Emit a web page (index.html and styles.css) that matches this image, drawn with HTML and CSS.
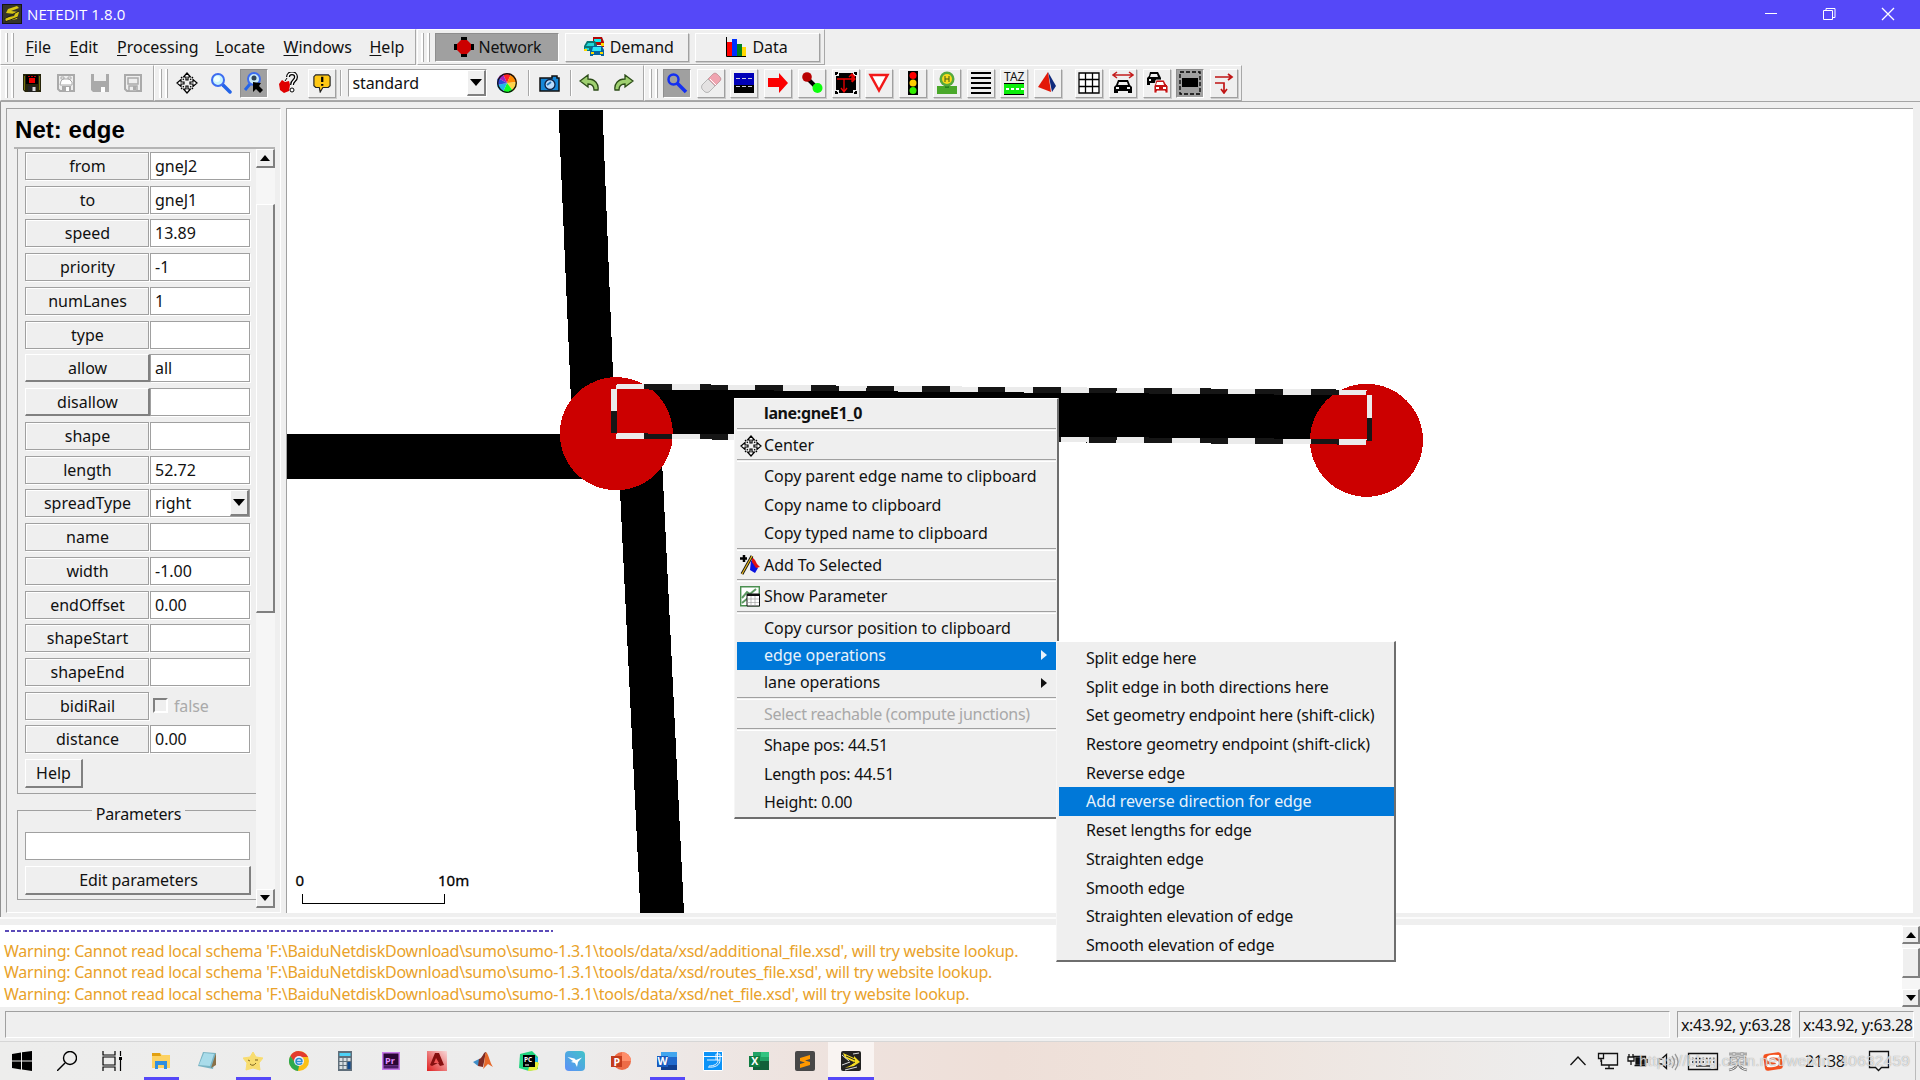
FILE: index.html
```html
<!DOCTYPE html>
<html lang="en">
<head>
<meta charset="utf-8">
<title>NETEDIT 1.8.0</title>
<link rel="stylesheet" href="styles.css">
</head>
<body>
<header class="titlebar">
  <svg class="app-logo" width="20" height="20" viewBox="0 0 20 20"><rect width="20" height="20" fill="#17170f"/><rect x="1" y="1" width="18" height="18" fill="#35342c"/><path d="M6 5l9-3 2 2-8 3 8 1-2 7-11 2-1-3 9-2 1-2-9-1z" fill="#d8c515"/><path d="M2 15l15-8M3 18l13-5" stroke="#22211a"/></svg>
  <span class="title-text">NETEDIT 1.8.0</span>
  <svg class="winbtns" width="140" height="29" viewBox="0 0 140 29" fill="none" stroke="#fff"><path d="M5 13.500h12"/><path d="M63.500 10.500h9v9h-9zM66 10.500v-2h9v9h-2"/><path d="M122 8l12 12M134 8l-12 12" stroke-width="1.300"/></svg>
</header>

<nav class="menurow">
  <div class="dock menus"><i class="grip"></i>
    <span class="m m-file"><u>F</u>ile</span><span class="m m-edit"><u>E</u>dit</span><span class="m m-proc"><u>P</u>rocessing</span><span class="m m-loc"><u>L</u>ocate</span><span class="m m-win"><u>W</u>indows</span><span class="m"><u>H</u>elp</span>
  </div>
  <div class="dock modes"><i class="grip"></i>
    <div class="mode on"><svg width="20" height="20" viewBox="0 0 20 20"><path d="M7 0h6v20H7zM0 7h20v6H0z"/><path d="M7 3h6l4 4v6l-4 4H7l-4-4V7z" fill="#c00"/></svg>Network</div>
    <div class="mode"><svg width="21" height="20" viewBox="0 0 21 20"><path d="M9 0h9l2 5v5h-3v-2H9V4z" fill="#b00808"/><path d="M10 2h7v3h-7z" fill="#1ee"/><path d="M3 4h8l2 4v6H0V9z" fill="#087878"/><path d="M4 6h6v3H2zM1 11h4v2H1z" fill="#1ed6d6"/><path d="M8 9h10l2 4v6h-3v-1H9v1H6v-6z" fill="#0563a0"/><path d="M9 10h8v4H8z" fill="#2de8f8"/><path d="M7 15h3v2H7zM16 15h3v2h-3zM17 6h3v3h-3zM0 12h3v2H0z" fill="#ffd900"/></svg>Demand</div>
    <div class="mode data"><svg width="21" height="20" viewBox="0 0 21 20"><path d="M1 5h5v14H1z" fill="#f00"/><path d="M6 2h5v17H6z" fill="#0030ff"/><path d="M11 7h5v12h-5z" fill="#008020"/><path d="M16 10h4v9h-4z" fill="#ffd800"/><path d="M.5 0v19.500H20" fill="none" stroke="#000"/></svg>Data</div>
  </div>
</nav>

<nav class="toolrow">
  <div class="dock files"><i class="grip"></i>
    <span class="slot"><svg width="18" height="18" viewBox="0 0 18 18"><path d="M0 0h18v18H2l-2-2z" fill="#26240a"/><path d="M3 1h12v9H3z" fill="#000"/><path d="M6 4h6v5H6z" fill="#e00"/><path d="M5 2.500h9" stroke="#b00" stroke-dasharray="2 1"/><path d="M5 12h8v6H5z" fill="#222"/><path d="M9.500 13h3v4h-3z" fill="#ddd"/><path d="M1.500 2v14M16.500 2v14" stroke="#777410" fill="none"/></svg></span>
    <span class="slot"><svg width="18" height="18" viewBox="0 0 18 18"><path d="M1 1h16v16H3l-2-2z" fill="#eee" stroke="#aaa" stroke-width="2"/><path d="M4 3h3v2H4zM11 3h3v2h-3zM4 7l2-2h6l3 3v3H3z" fill="#fff" stroke="#aaa"/><path d="M5 12h9v5H5z" fill="#aaa"/><path d="M9 13h3v4H9z" fill="#fff"/></svg></span>
    <span class="slot"><svg width="18" height="18" viewBox="0 0 18 18"><path d="M0 0h18v18H2l-2-2z" fill="#aaa"/><path d="M3 0h12v7H3z" fill="#eee"/><path d="M10 13h4v5h-4z" fill="#fff"/></svg></span>
    <span class="slot"><svg width="18" height="18" viewBox="0 0 18 18" fill="#eee" stroke="#aaa" stroke-width="2"><path d="M1 1h16v16H3l-2-2z"/><path d="M4 4h10v6H4zM5 12h8v5H5z" stroke-width="1.500"/><path d="M9 12h3v4H9z" fill="#aaa" stroke="none"/></svg></span>
  </div>
  <div class="dock view"><i class="grip"></i>
    <span class="slot"><svg width="22" height="22" viewBox="0 0 22 22" fill="#fff" stroke="#000" stroke-width="1.200"><g id="mv"><path d="M11 1l3.500 4H12v3h-2V5H7.500z"/><path d="M11 21l3.500-4H12v-3h-2v3H7.500z"/><path d="M1 11l4-3.500V10h3v2H5v2.500z"/><path d="M21 11l-4-3.500V10h-3v2h3v2.500z"/><path d="M5 5l3 3M17 5l-3 3M5 17l3-3M17 17l-3-3" stroke-dasharray="1.500 1"/></g></svg></span>
    <span class="slot"><svg width="22" height="22" viewBox="0 0 22 22"><path d="M13 13l7 7" stroke="#2364e8" stroke-width="3.500" stroke-linecap="round"/><circle cx="8" cy="8" r="6" fill="#c9f4fc" stroke="#3c6cf0" stroke-width="2"/><circle cx="7" cy="7" r="3" fill="#eeffff"/></svg></span>
    <span class="slot"><span class="tb on"><svg width="24" height="24" viewBox="0 0 24 24"><path d="M8 13l-5 6" stroke="#2364e8" stroke-width="3"/><circle cx="12" cy="8" r="6" fill="#c9eaf8" stroke="#3c6cf0" stroke-width="2"/><circle cx="12" cy="7" r="2.500" fill="#345"/><path d="M11 11l8 1-2 3 4 4-3 3-4-4-3 3z"/></svg></span></span>
    <span class="slot"><svg width="20" height="22" viewBox="0 0 20 22"><path d="M1 12l3-4 3 2 4-1 1 4-1 6-5 2-4-3z" fill="#e00000"/><path d="M7 9l2-3" stroke="#000"/><path d="M10 5c0-5 8-5 8 0 0 4-4 3-4 8" fill="none" stroke="#000" stroke-width="4"/><path d="M10 5c0-5 8-5 8 0 0 4-4 3-4 8" fill="none" stroke="#fff" stroke-width="1.500"/><circle cx="14" cy="18" r="2" fill="#fff" stroke="#000"/></svg></span>
    <span class="slot"><span class="tb"><svg width="18" height="20" viewBox="0 0 20 22"><path d="M3 2h14l2 2v10l-2 2h-6l-3 5-1-5H3l-2-2V4z" fill="#ffc813" stroke="#222" stroke-width="1.300"/><path d="M9 4h2.500v6H9zM9 12h2.500v2H9z"/></svg></span></span>
    <i class="vsep first"></i>
    <div class="combo"><span>standard</span><b class="drop"></b></div>
    <span class="slot wide"><svg width="20" height="20" viewBox="-10 -10 20 20"><path d="M0 0L-4-9A10 10 0 0 1 4-9z" fill="#f22"/><path d="M0 0L4-9A10 10 0 0 1 10-1z" fill="#ff8a00"/><path d="M0 0L10-1A10 10 0 0 1 6 8z" fill="#ffd54a"/><path d="M0 0L6 8A10 10 0 0 1-4 9z" fill="#1f2"/><path d="M0 0L-4 9A10 10 0 0 1-10 2z" fill="#20b8e8"/><path d="M0 0L-10 2A10 10 0 0 1-9-5z" fill="#3048d8"/><path d="M0 0L-9-5A10 10 0 0 1-4-9z" fill="#a020c0"/><circle r="9.300" fill="none" stroke="#111" stroke-width="1.300"/></svg></span>
    <i class="vsep"></i>
    <span class="slot wide"><svg width="21" height="17" viewBox="0 0 21 17"><path d="M1 3h12V1h5v2h2v13H1z" fill="#1687d8" stroke="#111" stroke-width="1.500"/><circle cx="11" cy="9.500" r="5" fill="#bdf" stroke="#124" stroke-width="1.300"/><path d="M8 10l4-3" stroke="#27b" stroke-width="2"/></svg></span>
    <i class="vsep late"></i>
    <span class="slot"><svg width="21" height="18" viewBox="0 0 21 18"><path d="M1 7l8-6v4c7 0 11 5 10 11h-4c0-4-2-6-6-6v3z" fill="#9fd070" stroke="#2c4c18" stroke-width="1.300"/></svg></span>
    <span class="slot"><svg width="21" height="18" viewBox="0 0 21 18"><path d="M20 7l-8-6v4C5 5 1 10 2 16h4c0-4 2-6 6-6v3z" fill="#9fd070" stroke="#2c4c18" stroke-width="1.300"/></svg></span>
  </div>
  <div class="dock edit"><i class="grip"></i>
    <span class="tb on"><svg width="22" height="22" viewBox="0 0 22 22" fill="none" stroke="#1530f0"><circle cx="7.500" cy="7.500" r="5" stroke-width="2.500"/><path d="M11 11l9 9" stroke-width="3.500"/></svg></span>
    <span class="tb"><svg width="22" height="22" viewBox="0 0 22 22"><path d="M13 2q2-2 4 0l3 3q2 2 0 4l-5 5-7-7z" fill="#f0a4b0" stroke="#b8888e" stroke-width=".7"/><path d="M8 7l7 7-6 6q-2 1-4 0l-3-3q-1-2 0-4z" fill="#e4e2e2" stroke="#aaa" stroke-width=".8"/><path d="M10 7l6 6" stroke="#fff"/></svg></span>
    <span class="tb"><svg width="22" height="22" viewBox="0 0 22 22"><path d="M1 1h20v12H1z" fill="#0000b8"/><path d="M1 13h20v8H1z"/><path d="M3 6.500h16M3 14.500h16" stroke="#ccd" stroke-width="1.200" stroke-dasharray="4 2"/></svg></span>
    <span class="tb"><svg width="22" height="22" viewBox="0 0 22 22"><path d="M1 6h11V1l9 10-9 10v-6H1z" fill="#fb0000"/></svg></span>
    <span class="tb"><svg width="22" height="22" viewBox="0 0 22 22"><path d="M6 6l10 10" stroke="#000" stroke-width="4"/><circle cx="6" cy="5" r="4.800" fill="#b80000"/><circle cx="16.500" cy="16" r="5" fill="#0cff0c"/></svg></span>
    <span class="tb"><svg width="22" height="22" viewBox="0 0 22 22"><path d="M1 4h20v14H1zM4 1h14v20H4z"/><path d="M1 3V1h2M19 1h2v2M1 19v2h2M19 21h2v-2" stroke="#000" stroke-width="2" fill="none"/><path d="M2 7h17M9 7v12M6 16l3 4 3-4M17 3v7M14 5l3-3 3 3M17 4l3 3-3 3" fill="none" stroke="#e00" stroke-width="1.300"/></svg></span>
    <span class="tb"><svg width="22" height="22" viewBox="0 0 22 22"><path d="M2.500 3h17L11 18.500z" fill="#fff" stroke="#f21818" stroke-width="2.500"/></svg></span>
    <span class="tb"><svg width="12" height="24" viewBox="0 0 12 24"><path d="M1 0h10v24H1z"/><circle cx="6" cy="4.500" r="3.500" fill="#f00"/><circle cx="6" cy="12" r="3.500" fill="#fc0"/><circle cx="6" cy="19.500" r="3.500" fill="#3e0"/></svg></span>
    <span class="tb"><svg width="22" height="24" viewBox="0 0 22 24"><path d="M1 15h20v8H1z" fill="#4aa82a"/><path d="M9 12h4v5H9z" fill="#26801a"/><circle cx="11" cy="8" r="7.500" fill="#54a93c"/><circle cx="11" cy="8" r="5" fill="#f6da1b"/><path d="M9 5v6M13 5v6M9 8h4" stroke="#3c5c12" fill="none"/></svg></span>
    <span class="tb"><svg width="22" height="24" viewBox="0 0 22 24" stroke="#000" stroke-width="2"><path d="M1 2h20M1 7h20M1 12h20M1 17h20M1 22h20"/></svg></span>
    <span class="tb taz"><span>TAZ</span><svg width="20" height="12" viewBox="0 0 20 12"><path d="M0 0h20v12H0z" fill="#0cee0c"/><path d="M0 .5h20M0 11.500h20" stroke="#000"/><path d="M2 6h18" stroke="#fff" stroke-width="2" stroke-dasharray="3 2"/></svg></span>
    <span class="tb"><svg width="22" height="22" viewBox="0 0 22 22"><path d="M11 0l8 14-4 6z" fill="#102a7c"/><path d="M11 0L1 15l13 5z" fill="#e31808"/></svg></span>
    <i class="gap"></i>
    <span class="tb"><svg width="22" height="22" viewBox="0 0 22 22" fill="#fff" stroke="#000" stroke-width="1.300"><path d="M1 1h20v20H1zM1 7.500h20M1 14.500h20M7.500 1v20M14.500 1v20"/></svg></span>
    <span class="tb"><svg width="22" height="24" viewBox="0 0 22 24"><path d="M1 4h20M5 1L1 4l4 3M17 1l4 3-4 3" fill="none" stroke="#c41c1c" stroke-width="1.500"/><path d="M6 9h10l2 5 2 2v6h-4v-2H6v2H2v-6l2-2z"/><path d="M7 11h8l1 3H6zM4 16h3v2H4zM15 16h3v2h-3z" fill="#eee"/></svg></span>
    <span class="tb"><svg width="22" height="24" viewBox="0 0 22 24"><path d="M4 1h8l2 4 1 2v6h-3v-1H4v2H1V7l2-2z"/><path d="M5 3h6l1 3H4zM3 8h2v2H3z" fill="#eee"/><path d="M10 9h8l2 4 2 2v7h-3v-2h-8v2H8v-7l1-2z" fill="#c41313" stroke="#fff" stroke-width=".8"/><path d="M11 11h6l1 3h-8zM10 16h3v2h-3zM17 16h3v2h-3z" fill="#fff"/></svg></span>
    <span class="tb on"><svg width="22" height="24" viewBox="0 0 22 24"><path d="M1 1h20v22H1z" fill="none" stroke="#000" stroke-width="1.300" stroke-dasharray="4 2"/><path d="M3 7h16v9H3z"/></svg></span>
    <span class="tb"><svg width="22" height="22" viewBox="0 0 22 22" fill="none" stroke="#c01515" stroke-width="1.700"><path d="M2 5h17M15 2l4 3-4 3M2 11h9v9M8 17l3 4 3-4"/></svg></span>
  </div>
</nav>

<main class="main">
  <aside class="panel">
    <h1>Net: edge</h1>
    <div class="scroller">
      <div class="content">
        <div class="attrs">
          <div class="row"><span class="lab">from</span><span class="val">gneJ2</span></div>
          <div class="row"><span class="lab">to</span><span class="val">gneJ1</span></div>
          <div class="row"><span class="lab">speed</span><span class="val">13.89</span></div>
          <div class="row"><span class="lab">priority</span><span class="val">-1</span></div>
          <div class="row"><span class="lab">numLanes</span><span class="val">1</span></div>
          <div class="row"><span class="lab">type</span><span class="val"></span></div>
          <div class="row"><span class="lab btn">allow</span><span class="val">all</span></div>
          <div class="row"><span class="lab btn">disallow</span><span class="val"></span></div>
          <div class="row"><span class="lab">shape</span><span class="val"></span></div>
          <div class="row"><span class="lab">length</span><span class="val">52.72</span></div>
          <div class="row"><span class="lab">spreadType</span><span class="val sel">right<b class="drop"></b></span></div>
          <div class="row"><span class="lab">name</span><span class="val"></span></div>
          <div class="row"><span class="lab">width</span><span class="val">-1.00</span></div>
          <div class="row"><span class="lab">endOffset</span><span class="val">0.00</span></div>
          <div class="row"><span class="lab">shapeStart</span><span class="val"></span></div>
          <div class="row"><span class="lab">shapeEnd</span><span class="val"></span></div>
          <div class="row"><span class="lab">bidiRail</span><span class="check"><i></i>false</span></div>
          <div class="row"><span class="lab">distance</span><span class="val">0.00</span></div>
          <div class="help btn">Help</div>
        </div>
        <div class="params">
          <div class="legend">Parameters</div>
          <div class="field"></div>
          <div class="btn wide">Edit parameters</div>
        </div>
      </div>
      <div class="sbar"><b class="sb up"></b><i class="thumb"></i><b class="sb down"></b></div>
    </div>
  </aside>
  <section class="canvas">
    <svg width="1626" height="805" viewBox="286 108 1626 805">
      <g shape-rendering="crispEdges">
        <path d="M558.500 110h44L614 400h-43z"/>
        <path d="M286 434h300v45H286z"/>
        <path d="M618.500 460H662l22 453h-43.500z"/>
        <path d="M616 387L1367 393v49L616 436z"/>
        <circle cx="616.300" cy="433.700" r="56.500" fill="#c00"/>
        <circle cx="1366.500" cy="440.300" r="56.500" fill="#c00"/>
        <g fill="none" stroke-width="5.500">
          <path d="M616.500 386.500L1366.500 392.500M616.500 436L1366.500 442M614 389v44M1369.500 395v46" stroke="#161616"/>
          <path d="M616.500 386.500L1366.500 392.500M616.500 436L1366.500 442" stroke="#ebebeb" stroke-dasharray="27.780"/>
          <path d="M614 389v22M1369.500 395v23" stroke="#ebebeb"/>
        </g>
        <path d="M302.500 894v9.500h142V894" fill="none" stroke="#000" stroke-width="1.500"/>
      </g>
      <g class="scale"><text x="295.500" y="886">0</text><text x="438" y="886">10m</text></g>
    </svg>
  </section>
</main>

<section class="log">
  <div class="lines">
    <i class="dashes"></i>
    <p class="w1">Warning: Cannot read local schema 'F:\BaiduNetdiskDownload\sumo\sumo-1.3.1\tools/data/xsd/additional_file.xsd', will try website lookup.</p>
    <p>Warning: Cannot read local schema 'F:\BaiduNetdiskDownload\sumo\sumo-1.3.1\tools/data/xsd/routes_file.xsd', will try website lookup.</p>
    <p>Warning: Cannot read local schema 'F:\BaiduNetdiskDownload\sumo\sumo-1.3.1\tools/data/xsd/net_file.xsd', will try website lookup.</p>
  </div>
  <div class="sbar log-bar"><b class="sb up"></b><i class="thumb"></i><b class="sb down"></b></div>
</section>

<footer class="status"><div class="cell grow"></div><div class="cell">x:43.92, y:63.28</div><div class="cell">x:43.92, y:63.28</div></footer>

<div class="taskbar">
  <div class="apps">
    <span class="t"><svg viewBox="0 0 20 20"><path d="M0 3l9-1.500V9.500H0zM10 1.300L20 0v9.500H10zM0 10.500h9v8L0 17zM10 10.500h10V20l-10-1.500z"/></svg></span>
    <span class="t"><svg viewBox="0 0 20 20" fill="none" stroke="#000" stroke-width="1.400"><circle cx="13" cy="7" r="6.500"/><path d="M8 12l-8 8"/></svg></span>
    <span class="t"><svg viewBox="0 0 20 20" fill="none" stroke="#000" stroke-width="1.200"><path d="M1 0v4h12V0M1 6h12v8H1zM1 20v-4h12v4M18.500 0v5M18.500 9v11"/><path d="M17 6h3v3h-3z" fill="#000" stroke="none"/></svg></span>
    <span class="t run"><svg viewBox="0 0 20 20"><path d="M1 2h8l2 2h8v13H1z" fill="#fdd262"/><path d="M1 2h8l1 3H1z" fill="#e2a010"/><path d="M4 18v-8h12v8h-3v-4H7v4z" fill="#2f8ee0"/></svg></span>
    <span class="t"><svg viewBox="0 0 20 20"><path d="M6 1l13 1-3 16-15-3z" fill="#79b4c4"/><path d="M7 2l10 1-4 12L2 14z" fill="#a9dcea"/><path d="M19 2v12l-5 3z" fill="#8a7046"/></svg></span>
    <span class="t run"><svg viewBox="0 0 20 20"><path d="M10 1l3 5 7 1-4 5 1 7-7-2-7 2 1-7-4-5 7-1z" fill="#f8dd70" stroke="#f8dd70" stroke-linejoin="round"/><path d="M5 9l2 1M12 9h3M7 13q3 3 6-1" fill="none" stroke="#7c6322"/></svg></span>
    <span class="t"><svg viewBox="0 0 20 20"><circle cx="10" cy="10" r="10" fill="#fbc116"/><path d="M1.300 5A10 10 0 0 1 19 6h-9l-4 6z" fill="#e33b2e"/><path d="M1.300 5L7 13l3 2-1 5A10 10 0 0 1 1.300 5" fill="#2da94f"/><circle cx="10" cy="10" r="5" fill="#eef"/><path d="M7 10.500h6c0-4-6-4-6 0s5 3 6 1.500" fill="none" stroke="#2a8fd0" stroke-width="1.500"/></svg></span>
    <span class="t"><svg viewBox="0 0 20 20"><path d="M3 0h14v20H3z" fill="#5f6e7a"/><path d="M4.500 2h11v3h-11z" fill="#4dd2f7"/><path d="M4.500 7h3v3h-3zM8.500 7h3v3h-3zM12.500 7h3v3h-3zM4.500 11h3v3h-3zM8.500 11h3v3h-3zM4.500 15h3v3h-3zM8.500 15h3v3h-3z" fill="#d9dfe3"/><path d="M12.500 11h3v7h-3z" fill="#104a90"/></svg></span>
    <span class="t"><svg viewBox="0 0 20 20"><path d="M1 1h18v18H1z" fill="#c77bea"/><path d="M2.500 2.500h15v12h-15z" fill="#2a0634"/><text x="4" y="12.500" class="glyph pr">Pr</text><path d="M2.500 14.500h15v3h-15z" fill="#4a1a66"/></svg></span>
    <span class="t"><svg viewBox="0 0 20 20"><defs><linearGradient id="ar" x1="1" y1="0" x2="0" y2="1"><stop offset="0" stop-color="#f8d8d8"/><stop offset="1" stop-color="#e02020"/></linearGradient></defs><path d="M0 0h20v20H0z" fill="url(#ar)"/><path d="M8 2h4l5 12-4 1-2-3-6 3-2-1z" fill="#861010"/><path d="M9 7l3 5H7z" fill="#e55"/></svg></span>
    <span class="t"><svg viewBox="0 0 20 20"><path d="M0 11l6-3 3 3-4 4z" fill="#3f8ec8"/><path d="M6 8c4-1 4-7 7-7l-3 15-5-1z" fill="#7c2a24"/><path d="M13 1c3 3 4 11 7 15l-5-3-5 5c2-5 1-12 3-17z" fill="#e5682a"/></svg></span>
    <span class="t"><svg viewBox="0 0 20 20"><path d="M1 3l12-3 6 6v12l-9 2-10-3z" fill="#22d47f"/><path d="M12 8l8 4-2 7-9 1z" fill="#e7ee3a"/><path d="M14 5l5 2v4h-5z" fill="#27b6e8"/><path d="M4 4h12v12H4z"/><text x="5" y="10.500" class="glyph pc">PC</text><path d="M6 14h4" stroke="#fff"/></svg></span>
    <span class="t"><svg viewBox="0 0 20 20"><defs><linearGradient id="bd" x2="0" y2="1" x1="1" y1="0"><stop stop-color="#40c3c8"/><stop offset="1" stop-color="#5d8ff8"/></linearGradient></defs><rect width="20" height="20" rx="4" fill="url(#bd)"/><path d="M2.500 6l7 1.500L11 9l6-2.500-4 4.500-1 5-2-4-4-1 2-1z" fill="#fff"/></svg></span>
    <span class="t"><svg viewBox="0 0 20 20"><circle cx="11" cy="10" r="9" fill="#ed6c47"/><path d="M11 1a9 9 0 0 1 9 9h-9z" fill="#ff8f6b"/><path d="M0 5h11v11H0z" fill="#c33c1d"/><text x="2.500" y="14.500" class="glyph office">P</text></svg></span>
    <span class="t run"><svg viewBox="0 0 20 20"><path d="M4 1h16v5H4z" fill="#41a5ee"/><path d="M4 6h16v8H4z" fill="#2069cc"/><path d="M4 14h16v5H4z" fill="#103f91"/><path d="M0 5h11v11H0z" fill="#185abd"/><text x="0.500" y="14" class="glyph office">W</text></svg></span>
    <span class="t"><svg viewBox="0 0 20 20"><path d="M.5.500h19v19H.5z" fill="#0c93f7" stroke="#fff"/><path d="M1 5.500h18M14.500 1v8M4 9h9M13 3h4v6h-4zM6 15c5 0 9-2 9-6M5 16c7 1 12-2 12-7" fill="none" stroke="#fff" stroke-width=".9"/></svg></span>
    <span class="t"><svg viewBox="0 0 20 20"><path d="M4 1h16v18H4z" fill="#21a366"/><path d="M4 10h16v9H4z" fill="#12603a"/><path d="M12 1h8v5h-8z" fill="#33c481"/><path d="M0 5h11v11H0z" fill="#107c41"/><text x="2.200" y="14" class="glyph office">X</text></svg></span>
    <span class="t"><svg viewBox="0 0 20 20"><rect width="20" height="20" rx="2" fill="#484848"/><path d="M15 4v4l-5 1.500 5 1.500v3L5 17v-4l5-1.500L5 10V7z" fill="#ff9800"/></svg></span>
    <span class="t run active"><svg viewBox="0 0 20 20"><rect width="20" height="20" rx="2" fill="#222"/><path d="M2 2l11 5 0-2 6 6-6 4-9 2 6-3 3-3-9-4z" fill="#f4dc22"/><path d="M1 4l7 6M1 14l8-3M4 19l12-3M12 3l6-1" stroke="#ddd"/><path d="M5 5l9 4M7 15l7-4" stroke="#222"/></svg></span>
  </div>
  <div class="tray">
    <svg width="345" height="38" viewBox="1570 1042 345 38" fill="none" stroke="#111" stroke-width="1.300">
      <path d="M1570.500 1065l7.500-8 7.500 8"/>
      <path d="M1603 1053.500h14.500v11.500h-16v-5M1609 1065v3.500M1605 1068.500h9M1598.500 1053.500h5v5h-5zM1601 1058v4"/>
      <path d="M1632.500 1056.500h13v9h-11M1647 1059v4M1628 1057h6v4h-6zM1629 1054v3M1633 1054v3M1631 1061v4"/><path d="M1636 1058h8v6h-8z" fill="#111"/>
      <path d="M1658.500 1059h3l5-4.500v14l-5-4.500h-3z"/><path d="M1669 1058q3 4 0 8M1672 1056q5 6 0 12M1675 1054q6 8 0 16" stroke="#999"/>
      <path d="M1688.500 1053.500h29v16h-29z"/><path d="M1692 1058.500h23M1692 1062h23" stroke-dasharray="1.500 2"/><path d="M1696 1066h14"/>
      <path d="M1729 1054h18M1734 1052v4M1742 1052v4M1731 1058h14v5h-14zM1738 1056v7M1728 1064h20M1737 1064q-1 5-8 6M1739 1064q1 5 8 6" stroke="#666" stroke-width="2.400"/>
      <path d="M1729 1054h18M1734 1052v4M1742 1052v4M1731 1058h14v5h-14zM1738 1056v7M1728 1064h20M1737 1064q-1 5-8 6M1739 1064q1 5 8 6" stroke="#f2f2f2" stroke-width="1"/>
      <rect x="1764" y="1053" width="18" height="17" rx="3" fill="#f4511e" stroke="none" transform="rotate(-8 1773 1061)"/><path d="M1779 1056.500c-13-2-14 4-6 4.500s6 6-6 4.500" stroke="#fff" stroke-width="2.800"/>
      <path d="M1869.500 1051.500h19v16h-7l-3 3-3-3h-6z"/>
    </svg>
    <span class="clock">21:38</span>
    <span class="mark">https://blog.csdn.net/weixin_40632459</span>
  </div>
</div>

<div class="menu ctx">
  <div class="it bold">lane:gneE1_0</div><hr>
  <div class="it"><svg class="mi" width="22" height="22" viewBox="0 0 22 22" fill="#fff" stroke="#000" stroke-width="1.200"><use href="#mv"/></svg>Center</div><hr>
  <div class="it">Copy parent edge name to clipboard</div>
  <div class="it">Copy name to clipboard</div>
  <div class="it">Copy typed name to clipboard</div><hr>
  <div class="it"><svg class="mi" width="20" height="20" viewBox="0 0 20 20"><path d="M4 0v7M0 3.500h7" stroke="#000" stroke-width="2.500"/><path d="M11 5l7 8-3 5-5-3z" fill="#0a12e0"/><path d="M12 2l3 3 2 4 3 3-4 1-4-6z" fill="#e01010"/><path d="M12 1L2 19" stroke="#111" stroke-width="3"/><path d="M12 1L2 19" stroke="#eebc20" stroke-width="1.200"/></svg>Add To Selected</div><hr>
  <div class="it"><svg class="mi" width="20" height="21" viewBox="0 0 20 21"><path d="M.7.700h18.600v19H.7z" fill="#fff" stroke="#4a8f50" stroke-width="1.400"/><path d="M2 12l5-6 3 2 6-5M2 17l6-5" stroke="#5d9a62" stroke-width="2" fill="none"/><path d="M7 8h12.500v12H7z" fill="#fff" stroke="#111"/><path d="M7 9h12" stroke="#111" stroke-width="2"/><path d="M7 13h12M7 16.500h12M11 10v10M15 10v10" stroke="#999" stroke-width=".6"/></svg>Show Parameter</div><hr>
  <div class="it">Copy cursor position to clipboard</div>
  <div class="it casc hot">edge operations<i class="arr"></i></div>
  <div class="it casc">lane operations<i class="arr"></i></div><hr>
  <div class="it disabled">Select reachable (compute junctions)</div><hr>
  <div class="it num">Shape pos: 44.51</div>
  <div class="it num">Length pos: 44.51</div>
  <div class="it num">Height: 0.00</div>
</div>
<div class="menu sub">
  <div class="it">Split edge here</div>
  <div class="it">Split edge in both directions here</div>
  <div class="it">Set geometry endpoint here (shift-click)</div>
  <div class="it">Restore geometry endpoint (shift-click)</div>
  <div class="it">Reverse edge</div>
  <div class="it hot">Add reverse direction for edge</div>
  <div class="it">Reset lengths for edge</div>
  <div class="it">Straighten edge</div>
  <div class="it">Smooth edge</div>
  <div class="it">Straighten elevation of edge</div>
  <div class="it">Smooth elevation of edge</div>
</div>
</body>
</html>
```
FILE: styles.css
```css
* { box-sizing: border-box; }
body {
  margin: 0; width: 1920px; height: 1080px; overflow: hidden; position: relative;
  display: flex; flex-direction: column;
  background: #efefef; color: #111;
  font: 16px/20px "Noto Sans", "Open Sans", sans-serif;
}
svg { display: block; flex: none; }

.titlebar { height: 29px; flex: none; background: #5548f8; color: #fff; display: flex; align-items: center; padding-left: 2px; }
.app-logo { margin-top: -1px; }
.title-text { margin-left: 5px; padding-bottom: 1px; flex: 1; font: 15px/20px "Open Sans", sans-serif; letter-spacing: .1px; }
.winbtns { margin-right: 20px; }

.menurow { height: 36px; flex: none; display: flex; }
.toolrow { height: 37px; flex: none; display: flex; border-bottom: 1px solid #a4a4a4; }
.dock { display: flex; align-items: center; border: 1px solid; border-color: #fff #a8a8a8 #a8a8a8 #fff; flex: none; padding-left: 4px; }
.grip { width: 9px; height: 29px; flex: none; border: solid #a8a8a8; border-width: 0 1px; background: linear-gradient(90deg, #fff 0 1px, #a8a8a8 1px 2px, #efefef 2px 5px, #fff 5px 7px); border-left-color: #fff; }
.menus { width: 416px; }
.m { white-space: nowrap; }
.menus .grip { margin-right: 11.500px; }
.m-file { width: 44px; } .m-edit { width: 47.500px; } .m-proc { width: 98.500px; } .m-loc { width: 68px; } .m-win { width: 86px; }
.m u { text-underline-offset: 2px; }
.modes { width: 408px; margin-left: 1px; gap: 6px; padding-left: 3px; }
.modes .grip { margin-right: -1px; }
.mode { width: 124.200px; height: 29px; display: flex; align-items: center; gap: 5px; padding-left: 17.500px; border: 1px solid; border-color: #fff #a0a0a0 #a0a0a0 #fff; box-shadow: 1px 1px 0 #ccc; letter-spacing: -0.050px; }
.mode.on { letter-spacing: -0.200px; }
.mode.data { padding-left: 30px; }
.on { background: #a0a0a0; border-color: #8e8e8e #fff #fff #8e8e8e !important; box-shadow: none !important; }

.slot { width: 33.700px; display: flex; justify-content: center; flex: none; }
.slot.wide { width: 41px; }
.tb { width: 28px; height: 29px; flex: none; display: flex; align-items: center; justify-content: center; border: 1px solid; border-color: #fff #a0a0a0 #a0a0a0 #fff; box-shadow: 1px 1px 0 #ccc; }
.files { width: 154px; }
.files .grip { margin-right: 1.500px; }
.view { width: 490px; }
.view .grip { margin-right: 2px; }
.vsep { width: 2px; height: 26px; background: #a8a8a8; border-right: 1px solid #fff; flex: none; margin: 0 -1px 0 0; }
.vsep.first { margin: 0 6px 0 2px; }
.vsep.late { margin-right: 1px; }
.combo { width: 138.500px; height: 28px; flex: none; background: #fff; border: 1px solid; border-color: #a0a0a0 #fff #fff #a0a0a0; display: flex; align-items: center; justify-content: space-between; padding-left: 3px; letter-spacing: -0.100px; }
.drop { width: 19px; height: 26px; background: #efefef; border: solid; border-color: #fff #808080 #808080 #fff; border-width: 1px 2px 2px 1px; display: flex; align-items: center; justify-content: center; }
.drop::after { content: ""; border: solid transparent; border-width: 7px 6px 0; border-top-color: #000; }
.edit { width: 598px; gap: 5.750px; padding-left: 3px; }
.edit .grip { margin-right: -1px; margin-left: 1px; }
.gap { width: 1.500px; }
.taz { flex-direction: column; }
.taz span { font: 12px/12px "Noto Sans", sans-serif; }

.main { height: 823px; flex: none; display: flex; padding: 6px 7px 12px 5px; gap: 6px; border-left: 1px solid #909090; }
.panel { width: 275px; border: 1px solid; border-color: #a0a0a0 #fff #fff #a0a0a0; padding: 0 5px 4px 7px; display: flex; flex-direction: column; }
.panel h1 { margin: 0; height: 40px; border-bottom: 2px solid #b4b4b4; padding: 2px 0 0 1px; font: bold 24px/37px "Liberation Sans", Arial, sans-serif; letter-spacing: .050px; color: #000; white-space: nowrap; }
.scroller { flex: 1; display: flex; min-height: 0; }
.content { width: 242px; padding-left: 3px; }
.attrs { height: 645px; border: solid #a0a0a0; border-width: 0 0 1px 1px; padding: 3px 0 0 7px; }
.row { display: flex; gap: 1px; height: 33.740px; }
.lab { width: 124px; height: 28px; border: 1px solid #a0a0a0; box-shadow: inset 1px 1px 0 #fff, 1px 1px 0 #fff; text-align: center; line-height: 26px; padding-left: 1px; }
.val { width: 100px; height: 28px; background: #fff; border: 1px solid #a0a0a0; box-shadow: 1px 1px 0 #fff; padding-left: 4px; line-height: 26px; }
.val.sel { display: flex; justify-content: space-between; }
.btn { background: #efefef; border: solid; border-width: 1px 2px 2px 1px; border-color: #fff #808080 #808080 #fff; box-shadow: none; text-align: center; }
.lab.btn { width: 125px; margin-right: -1px; }
.check { display: flex; color: #aaa; line-height: 28px; padding-left: 3px; letter-spacing: -0.150px; }
.check i { width: 15px; height: 15px; margin: 6px 6px 0 0; border: 2px solid; border-color: #808080 #fff #fff #808080; }
.help { width: 58px; height: 29px; line-height: 27px; }
.params { height: 90px; margin-top: 16px; border: solid #a0a0a0; border-width: 1px 0 1px 1px; padding: 0 5px 0 7px; }
.legend { width: 93px; margin: -9px 66px 0 auto; height: 20px; line-height: 24px; background: #efefef; text-align: center; letter-spacing: -0.150px; }
.field { height: 28px; background: #fff; border: 1px solid #a0a0a0; margin: 10px 1px 6px 0; }
.btn.wide { height: 29px; line-height: 27px; padding-left: 2px; letter-spacing: -0.100px; }
.sbar { width: 19px; display: flex; flex-direction: column; background: #f6f6f6; }
.sb { height: 19px; flex: none; background: #efefef; border: solid; border-width: 1px 2px 2px 1px; border-color: #fff #808080 #808080 #fff; display: flex; align-items: center; justify-content: center; }
.sb::after { content: ""; border: solid transparent; }
.up::after { border-width: 0 5px 6px; border-bottom-color: #000; }
.down::after { border-width: 6px 5px 0; border-top-color: #000; }
.thumb { background: #efefef; border: solid; border-width: 1px 2px 2px 1px; border-color: #fff #808080 #808080 #fff; height: 409px; margin: 36px 0 auto; }
.canvas { width: 1627px; margin-left: -1px; background: #fff; border-left: 1px solid #a0a0a0; border-top: 1px solid #a0a0a0; overflow: hidden; }
.canvas svg { margin: -1px 0 0 -1px; }
.scale { font: 15px "Noto Sans", sans-serif; fill: #000; stroke: #000; stroke-width: .3px; }

.log { height: 82px; flex: none; background: #fff; display: flex; justify-content: space-between; box-shadow: 0 -6px 0 #efefef, 0 -8px 0 #fbfbfb; }
.lines { padding: 5px 0 0 4px; color: #e9a22a; letter-spacing: -0.235px; }
.lines p { margin: 0; height: 21.500px; line-height: 21.500px; white-space: nowrap; }
.lines .w1 { margin-top: 8.700px; }
.dashes { display: block; width: 548px; height: 2px; margin-left: 1px; background: repeating-linear-gradient(90deg, #5b4bb8 0 4px, #fff 4px 6px); }
.log-bar { width: 18px; padding-top: 1px; }
.log-bar .sb { height: 18px; }
.log-bar .thumb { height: 30px; margin: 4px 0 auto; }

.status { height: 35px; flex: none; display: flex; gap: 7px; padding: 4px 6px 3px 5px; border-bottom: 1px solid #d6d6d6; }
.cell { width: 115px; border: 1px solid; border-color: #a0a0a0 #fff #fff #a0a0a0; padding-left: 3px; line-height: 27px; white-space: nowrap; letter-spacing: -0.370px; }
.cell.grow { width: auto; flex: 1; }

.taskbar { height: 38px; flex: none; display: flex; justify-content: space-between; background: linear-gradient(90deg, #ededec 0, #ececec 560px, #eee3df 800px, #eedfd8 1000px, #efe3dc 1200px, #ededed 1560px); }
.apps { display: flex; }
.t { width: 46px; height: 38px; display: flex; align-items: center; justify-content: center; }
.t svg { width: 20px; height: 20px; }
.t:nth-child(-n+3) { width: 45px; }
.t:first-child { width: 44px; }
.t:nth-child(4) { margin-left: 4px; }
.run { background: linear-gradient(#5548f8, #5548f8) 50% 100% / 35px 3px no-repeat; }
.active { background: linear-gradient(#5548f8, #5548f8) 50% 100% / 46px 3px no-repeat #f9f4f2; }
.glyph { font-family: "Open Sans", sans-serif; fill: #fff; font-weight: bold; }
.pr { font-size: 9px; fill: #e090ff; } .pc { font-size: 6.500px; } .office { font-size: 10.500px; }
.tray { position: relative; width: 345px; margin-right: 4px; border-right: 1px solid #bbb; margin-left: auto; }
.tray svg { margin-left: -1px; }
.clock { position: absolute; left: 234px; top: 9px; font: 16px/20px "Open Sans", sans-serif; letter-spacing: -0.200px; }
.mark { position: absolute; left: 68px; top: 9px; font: 15.500px/20px "Liberation Sans", Arial, sans-serif; letter-spacing: .200px; color: rgba(255,255,255,.7); text-shadow: 0 0 1px rgba(110,110,110,.8); white-space: nowrap; }

.menu { position: absolute; background: #efefef; border: solid; border-width: 1px 2px 2px 1px; border-color: #fff #6e6e6e #6e6e6e #f6f6f6; letter-spacing: -0.060px; }
.ctx { left: 734px; top: 398px; width: 325px; height: 421px; padding: .3px 1px 0 2px; }
.it { height: 28.700px; line-height: 28.700px; padding-left: 27px; white-space: nowrap; position: relative; }
.bold { font-weight: bold; letter-spacing: -0.380px; }
.menu hr { height: 2.700px; margin: 0; border: solid; border-width: 1px 0 1px; border-color: #a0a0a0 transparent #fff; }
.casc { height: 27.300px; line-height: 25px; padding-bottom: 1px; display: flex; align-items: center; justify-content: space-between; padding-right: 9px; }
.hot { background: #0078d8; color: #e8f2fb; }
.arr { border: solid transparent; border-width: 5px 0 5px 6px; border-left-color: currentColor; }
.disabled { color: #a8a8a8; letter-spacing: -0.280px; }
.num { letter-spacing: -0.200px; }
.mi { position: absolute; left: 3px; top: 4px; }
.sub { left: 1056px; top: 641px; width: 340px; height: 321px; padding: 2px 0 0 2px; letter-spacing: -0.180px; }
.sub .hot { letter-spacing: -0.080px; }
```
